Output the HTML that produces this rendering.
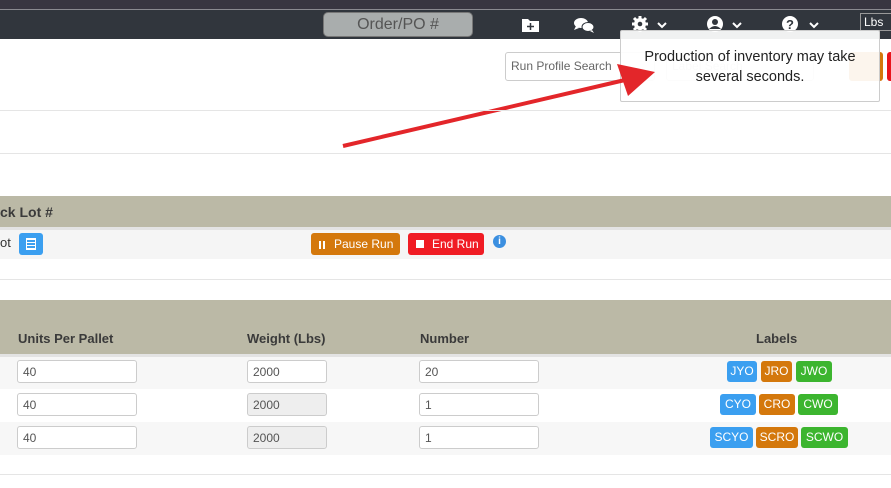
<!DOCTYPE html>
<html><head><style>
*{box-sizing:border-box;margin:0;padding:0}
body{width:891px;height:488px;overflow:hidden;background:#fff;font-family:"Liberation Sans",sans-serif;font-size:13px;color:#333;position:relative}
.a{position:absolute;white-space:nowrap}
.inp{position:absolute;height:23px;border:1px solid #ccc;border-radius:3px;background:#fff;font-size:12px;color:#555;padding:4px 5px;white-space:nowrap;overflow:hidden}
.dis{background:#eee}
.th{font-weight:bold;color:#3a3a3a;font-size:13px}
.lb{position:absolute;height:21px;border-radius:3px;color:#fff;font-size:12px;line-height:21px;text-align:center}
.b{background:#3b9ff0}.o{background:#d4780c}.g{background:#3cb52f}
</style></head><body>
<div class="a" style="left:0;top:0;width:891px;height:9px;background:#383641"></div>
<div class="a" style="left:0;top:9px;width:891px;height:1px;background:#8a8a90"></div>
<div class="a" style="left:0;top:10px;width:891px;height:29px;background:#31363d"></div>
<div class="a" style="left:323px;top:12px;width:150px;height:25px;background:#a9adad;border:1px solid #777;border-radius:5px;color:#555;font-size:16px;text-align:center;line-height:23px">Order/PO #</div>
<svg class="a" style="left:520px;top:14px" width="300" height="22">
<path d="M2 5h6l2 2h9v11H2z" fill="#fff"/><path d="M10.5 9v7M7 12.5h7" stroke="#31363d" stroke-width="1.5"/>
<ellipse cx="61" cy="9" rx="7" ry="5" fill="#fff"/><ellipse cx="68" cy="13" rx="6" ry="4.5" fill="#fff" stroke="#31363d" stroke-width="1"/><path d="M56 12l-2 4 5-2z M72 16l2 3-4-2z" fill="#fff"/>
<circle cx="120" cy="10" r="6" fill="#fff"/><path d="M120 2v16M112 10h16M114 4l12 12M126 4l-12 12" stroke="#fff" stroke-width="3"/><circle cx="120" cy="10" r="2.3" fill="#31363d"/>
<path d="M138 9l4 4 4-4M213 9l4 4 4-4M290 9l4 4 4-4" stroke="#fff" stroke-width="2" fill="none"/>
<circle cx="195" cy="10" r="8" fill="#fff"/><circle cx="195" cy="8" r="3" fill="#31363d"/><path d="M189 15q6-6 12 0" fill="#31363d"/>
<circle cx="270" cy="10" r="8" fill="#fff"/><text x="270" y="15" font-size="13" font-weight="bold" fill="#31363d" text-anchor="middle" font-family="Liberation Sans">?</text>
</svg>
<div class="a" style="left:860px;top:13px;width:40px;height:18px;border:1px solid #999;color:#fff;font-size:12px;padding-left:3px;line-height:16px">Lbs</div>
<div class="inp" style="left:505px;top:52px;width:150px;height:29px;line-height:19px;color:#666">Run Profile Search</div>
<div class="inp" style="left:666px;top:52px;width:148px;height:29px;color:#bbb;line-height:19px">Label Search</div>
<div class="a" style="left:849px;top:52px;width:34px;height:29px;background:#d4780c;border-radius:3px"></div>
<div class="a" style="left:887px;top:52px;width:10px;height:29px;background:#e8141c;border-radius:3px"></div>
<div class="a" style="left:620px;top:30px;width:260px;height:72px;background:rgba(255,255,255,.93);border:1px solid #ccc;border-radius:2px;text-align:center;font-size:14.5px;line-height:20px;padding-top:16px;color:#222">Production of inventory may take<br>several seconds.</div>
<svg class="a" style="left:0;top:0" width="891" height="488"><path d="M343 146L625 80" stroke="#e3262a" stroke-width="4"/><path d="M655 72L617 64L628 96z" fill="#e3262a"/></svg>
<div class="a" style="left:0;top:110px;width:891px;height:1px;background:#e5e5e5"></div>
<div class="a" style="left:0;top:153px;width:891px;height:1px;background:#e5e5e5"></div>
<div class="a" style="left:0;top:196px;width:891px;height:31px;background:#bbb9a6"></div>
<div class="a th" style="left:0;top:204px;font-size:14px">ck Lot #</div>
<div class="a" style="left:0;top:227px;width:891px;height:3px;background:#e3e3e3"></div>
<div class="a" style="left:0;top:230px;width:891px;height:29px;background:#f5f5f5"></div>
<div class="a" style="left:0;top:235px;font-size:13px">ot</div>
<div class="a" style="left:19px;top:233px;width:24px;height:22px;background:#3b9ff0;border-radius:3px"><div style="margin:5px 7px;width:10px;height:12px;border:1.5px solid #fff;background:repeating-linear-gradient(#fff 0 1px,#3b9ff0 1px 3px)"></div></div>
<div class="a" style="left:311px;top:233px;width:89px;height:22px;background:#d4780c;border-radius:3px;color:#fff;font-size:12px;line-height:22px;padding-left:8px"><span style="display:inline-block;width:2px;height:8px;background:#fff;border-right:0;margin-right:2px;vertical-align:-1px"></span><span style="display:inline-block;width:2px;height:8px;background:#fff;margin-right:9px;vertical-align:-1px"></span>Pause Run</div>
<div class="a" style="left:408px;top:233px;width:76px;height:22px;background:#f01c24;border-radius:3px;color:#fff;font-size:12px;line-height:22px;padding-left:8px"><span style="display:inline-block;width:8px;height:8px;background:#fff;margin-right:8px"></span>End Run</div>
<div class="a" style="left:493px;top:235px;width:13px;height:13px;border-radius:50%;background:#3b8fe0;color:#fff;font-size:10px;font-weight:bold;text-align:center;line-height:13px">i</div>
<div class="a" style="left:0;top:279px;width:891px;height:1px;background:#e5e5e5"></div>
<div class="a" style="left:0;top:300px;width:891px;height:54px;background:#bbb9a6"></div>
<div class="a th" style="left:18px;top:331px">Units Per Pallet</div>
<div class="a th" style="left:247px;top:331px">Weight (Lbs)</div>
<div class="a th" style="left:420px;top:331px">Number</div>
<div class="a th" style="left:756px;top:331px">Labels</div>
<div class="a" style="left:0;top:354px;width:891px;height:3px;background:#e3e3e3"></div>
<div class="a" style="left:0;top:357px;width:891px;height:32px;background:#f7f7f7"></div>
<div class="a" style="left:0;top:422px;width:891px;height:33px;background:#f7f7f7"></div>
<div class="a" style="left:0;top:474px;width:891px;height:1px;background:#e5e5e5"></div>
<div class="inp" style="left:17px;top:360px;width:120px">40</div>
<div class="inp" style="left:247px;top:360px;width:80px">2000</div>
<div class="inp" style="left:419px;top:360px;width:120px">20</div>
<div class="inp" style="left:17px;top:393px;width:120px">40</div>
<div class="inp dis" style="left:247px;top:393px;width:80px">2000</div>
<div class="inp" style="left:419px;top:393px;width:120px">1</div>
<div class="inp" style="left:17px;top:426px;width:120px">40</div>
<div class="inp dis" style="left:247px;top:426px;width:80px">2000</div>
<div class="inp" style="left:419px;top:426px;width:120px">1</div>
<div class="lb b" style="left:727px;top:361px;width:30px">JYO</div>
<div class="lb o" style="left:761px;top:361px;width:31px">JRO</div>
<div class="lb g" style="left:796px;top:361px;width:36px">JWO</div>
<div class="lb b" style="left:720px;top:394px;width:36px">CYO</div>
<div class="lb o" style="left:759px;top:394px;width:36px">CRO</div>
<div class="lb g" style="left:798px;top:394px;width:40px">CWO</div>
<div class="lb b" style="left:710px;top:427px;width:43px">SCYO</div>
<div class="lb o" style="left:756px;top:427px;width:42px">SCRO</div>
<div class="lb g" style="left:801px;top:427px;width:47px">SCWO</div>
</body></html>
